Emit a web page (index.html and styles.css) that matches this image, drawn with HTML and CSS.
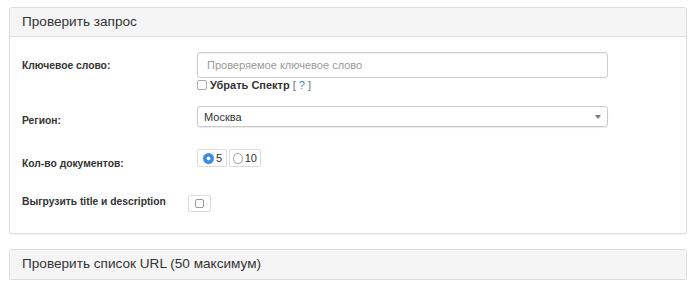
FILE: index.html
```html
<!DOCTYPE html>
<html lang="ru">
<head>
<meta charset="utf-8">
<title>Проверить запрос</title>
<link rel="stylesheet" href="styles.css">
</head>
<body>
<div class="page">
  <section class="panel">
    <div class="panel-heading">Проверить запрос</div>
    <div class="panel-body">
      <div class="row row-keyword">
        <label class="label">Ключевое слово:</label>
        <div class="control">
          <input class="text-input" type="text" placeholder="Проверяемое ключевое слово">
        </div>
      </div>
      <div class="row row-spectr">
        <div class="label"></div>
        <div class="control spectr">
          <span class="mini-check"></span>
          <b>Убрать Спектр</b>
          <span class="hint">[ <a class="hint-link">?</a> ]</span>
        </div>
      </div>
      <div class="row row-region">
        <label class="label">Регион:</label>
        <div class="control">
          <div class="select">
            <span>Москва</span>
            <span class="caret"></span>
          </div>
        </div>
      </div>
      <div class="row row-docs">
        <label class="label">Кол-во документов:</label>
        <div class="control radios">
          <label class="radio-btn"><input type="radio" name="docs" checked><span>5</span></label>
          <label class="radio-btn"><input type="radio" name="docs"><span>10</span></label>
        </div>
      </div>
      <div class="row row-export">
        <label class="label">Выгрузить title и description</label>
        <div class="control">
          <label class="check-btn"><input type="checkbox"></label>
        </div>
      </div>
    </div>
  </section>
  <section class="panel panel-collapsed">
    <div class="panel-heading">Проверить список URL (50 максимум)</div>
  </section>
</div>
</body>
</html>
```
FILE: styles.css
```css
* { box-sizing: border-box; }
html, body { margin: 0; padding: 0; background: #fff; }
body {
  font-family: "Liberation Sans", Arial, sans-serif;
  color: #333;
  font-size: 11px;
}
.page {
  padding: 7px 13px 0 9px;
}
.panel {
  border: 1px solid #dddddd;
  border-radius: 3px;
  background: #fff;
  box-shadow: 0 1px 1px rgba(0,0,0,0.05);
}
.panel + .panel { margin-top: 15px; }
.panel-heading {
  height: 29px;
  background: #f5f5f5;
  border-bottom: 1px solid #dddddd;
  padding: 0 12px;
  font-size: 13.6px;
  line-height: 28px;
  color: #333;
  border-radius: 3px 3px 0 0;
}
.panel-collapsed .panel-heading {
  border-bottom: none;
  border-radius: 3px;
}
.panel-body {
  padding: 15px 12px 21px;
}
.row {
  display: flex;
  align-items: center;
}
.label {
  width: 175px;
  flex: none;
  font-weight: bold;
  font-size: 10.3px;
  color: #333;
}
.control {
  width: 411px;
  flex: none;
}
.text-input {
  display: block;
  width: 100%;
  height: 26px;
  border: 1px solid #cccccc;
  border-radius: 3px;
  box-shadow: inset 0 1px 1px rgba(0,0,0,0.06);
  padding: 0 9px;
  font-family: inherit;
  font-size: 11px;
  color: #555;
  outline: none;
}
.text-input::placeholder { color: #999; }
.row-spectr { margin-top: 0; height: 14px; }
.spectr {
  display: flex;
  align-items: center;
  font-size: 11px;
  line-height: 14px;
}
.mini-check {
  width: 10px;
  height: 10px;
  border: 1px solid #aaa;
  border-radius: 2px;
  margin: 0 3px 0 0;
  background: #fff;
}
.spectr b { margin-right: 3px; }
.hint { color: #777; }
.hint-link { color: #428bca; }
.row-region { margin-top: 14px; align-items: flex-start; }
.row-region .label { padding-top: 9px; }
.select {
  height: 21px;
  border: 1px solid #c9c9c9;
  border-radius: 3px;
  box-shadow: 0 1px 1px rgba(0,0,0,0.08);
  display: flex;
  align-items: center;
  padding: 0 6px 0 6px;
  font-size: 11px;
  color: #333;
}
.caret {
  margin-left: auto;
  width: 0;
  height: 0;
  border-left: 3px solid transparent;
  border-right: 3px solid transparent;
  border-top: 4px solid #777;
}
.row-docs { margin-top: 22px; align-items: flex-start; }
.row-docs .label { padding-top: 9px; }
.radios { display: flex; gap: 2px; }
.radio-btn {
  display: flex;
  align-items: center;
  height: 18px;
  border: 1px solid #dcdcdc;
  border-radius: 2px;
  padding: 0 3px 0 5px;
  background: #fff;
  font-size: 11px;
  color: #333;
}
.radio-btn:first-child { width: 30px; }
.radio-btn:last-child { width: 32px; padding-left: 3px; }
.radio-btn input {
  appearance: none;
  -webkit-appearance: none;
  margin: 0 2px 0 0;
  width: 11px;
  height: 11px;
  border: 1px solid #aaa;
  border-radius: 50%;
  background: #fff;
}
.radio-btn input:checked {
  border: none;
  background: radial-gradient(circle, #fff 0 1.6px, #3d8fe0 2.2px);
}
.row-export { margin-top: 26px; align-items: flex-start; }
.row-export .label { padding-top: 1px; }
.check-btn {
  display: flex;
  align-items: center;
  justify-content: center;
  width: 23px;
  height: 17px;
  margin-left: -9px;
  border: 1px solid #dcdcdc;
  border-radius: 2px;
  background: #fff;
}
.check-btn input {
  appearance: none;
  -webkit-appearance: none;
  margin: 0;
  width: 9px;
  height: 9px;
  border: 1px solid #999;
  border-radius: 2px;
  background: #fff;
}
```
